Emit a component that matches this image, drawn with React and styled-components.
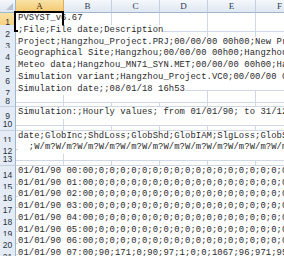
import React from 'react';
import styled, { createGlobalStyle } from 'styled-components';

const GlobalStyle = createGlobalStyle`
  html, body {
    margin: 0;
    padding: 0;
    background: #ffffff;
    overflow: hidden;
  }
`;

const Sheet = styled.div`
  display: flex;
  flex-direction: column;
  width: 320px;
  background: #ffffff;
`;

const HeaderRow = styled.div`
  display: grid;
  grid-template-columns: 16px repeat(6, 48px);
  height: 13px;
`;

const Corner = styled.div`
  position: relative;
  box-sizing: border-box;
  background: linear-gradient(#f4f7fb, #dfe6f0);
  border-right: 1px solid #9eb6ce;
  border-bottom: 1px solid #9eb6ce;

  &::after {
    content: "";
    position: absolute;
    right: 2px;
    bottom: 2px;
    border-left: 7px solid transparent;
    border-bottom: 7px solid #b4c2d3;
  }
`;

const ColHead = styled.div`
  box-sizing: border-box;
  display: flex;
  align-items: center;
  justify-content: center;
  font-family: "Liberation Serif", serif;
  font-size: 9px;
  color: ${(p) => (p.$active ? '#3a2a10' : '#2c3e55')};
  background: ${(p) =>
    p.$active
      ? 'linear-gradient(#fae2a8, #f4c86e)'
      : 'linear-gradient(#f5f8fc, #dfe7f1)'};
  border-right: 1px solid ${(p) => (p.$active ? '#e0ad55' : '#c3d0de')};
  border-bottom: 1px solid ${(p) => (p.$active ? '#d59c3c' : '#9eb6ce')};
`;

const Row = styled.div`
  display: grid;
  grid-template-columns: 16px repeat(6, 48px);
  height: 11.75px;
`;

const RowHead = styled.div`
  box-sizing: border-box;
  display: flex;
  align-items: center;
  justify-content: center;
  font-family: "Liberation Sans", sans-serif;
  font-size: 8.5px;
  line-height: 10px;
  color: #27313d;
  background: ${(p) =>
    p.$active ? 'linear-gradient(#fae2a8, #f4c86e)' : '#e4ebf5'};
  border-right: 1px solid ${(p) => (p.$active ? '#d59c3c' : '#9eb6ce')};
  border-bottom: 1px solid ${(p) => (p.$active ? '#e0ad55' : '#c3d0de')};
`;

const Cell = styled.div`
  box-sizing: border-box;
  position: relative;
  z-index: ${(p) => (p.$lead ? 1 : 0)};
  border-right: 1px solid #d0d7e5;
  border-bottom: 1px solid #d0d7e5;
  min-width: 0;
  overflow: visible;
  padding-left: 2px;
`;

const CellText = styled.span`
  display: inline-block;
  height: 100%;
  background: #ffffff;
  white-space: pre;
  font-family: "Liberation Mono", monospace;
  font-size: 8.85px;
  letter-spacing: 0.08px;
  line-height: 11px;
  color: #2a2a2a;
  vertical-align: top;
`;

const Selection = styled.div`
  position: absolute;
  top: -2px;
  left: -2px;
  right: -1px;
  bottom: -1px;
  border: 2px solid #000000;
  pointer-events: none;
`;

const FillHandle = styled.div`
  position: absolute;
  right: -4px;
  bottom: -4px;
  width: 5px;
  height: 5px;
  background: #000000;
  border: 1px solid #ffffff;
`;

const zeros = Array(36).fill('0').join(';');
const units = Array(14).fill('W/m?').join('');

const rows = [
  'PVSYST_v6.67',
  ';File;File date;Description',
  'Project;Hangzhou_Project.PRJ;00/00/00 00h00;New Project',
  'Geographical Site;Hangzhou;00/00/00 00h00;Hangzhou',
  'Meteo data;Hangzhou_MN71_SYN.MET;00/00/00 00h00;Hangzhou',
  'Simulation variant;Hangzhou_Project.VC0;00/00/00 00h00;',
  'Simulation date;;08/01/18 16h53',
  '',
  'Simulation:;Hourly values; from 01/01/90; to 31/12/90',
  '',
  'date;GlobInc;ShdLoss;GlobShd;GlobIAM;SlgLoss;GlobSoil;GlobEff',
  '  ;' + units,
  '',
  '01/01/90 00:00;' + zeros,
  '01/01/90 01:00;' + zeros,
  '01/01/90 02:00;' + zeros,
  '01/01/90 03:00;' + zeros,
  '01/01/90 04:00;' + zeros,
  '01/01/90 05:00;' + zeros,
  '01/01/90 06:00;' + zeros,
  '01/01/90 07:00;90;171;0;90;97;1;0;0;1067;96;971;95;99;1;0500;0',
];

const columns = ['A', 'B', 'C', 'D', 'E', 'F'];

export default function App() {
  return (
    <>
      <GlobalStyle />
      <Sheet>
        <HeaderRow>
          <Corner />
          {columns.map((c) => (
            <ColHead key={c} $active={c === 'A'}>
              {c}
            </ColHead>
          ))}
        </HeaderRow>
        {rows.map((text, i) => (
          <Row key={i}>
            <RowHead $active={i === 0}>{i + 1}</RowHead>
            <Cell $lead>
              {text && <CellText>{text}</CellText>}
              {i === 0 && (
                <Selection>
                  <FillHandle />
                </Selection>
              )}
            </Cell>
            {columns.slice(1).map((c) => (
              <Cell key={c} />
            ))}
          </Row>
        ))}
      </Sheet>
    </>
  );
}
